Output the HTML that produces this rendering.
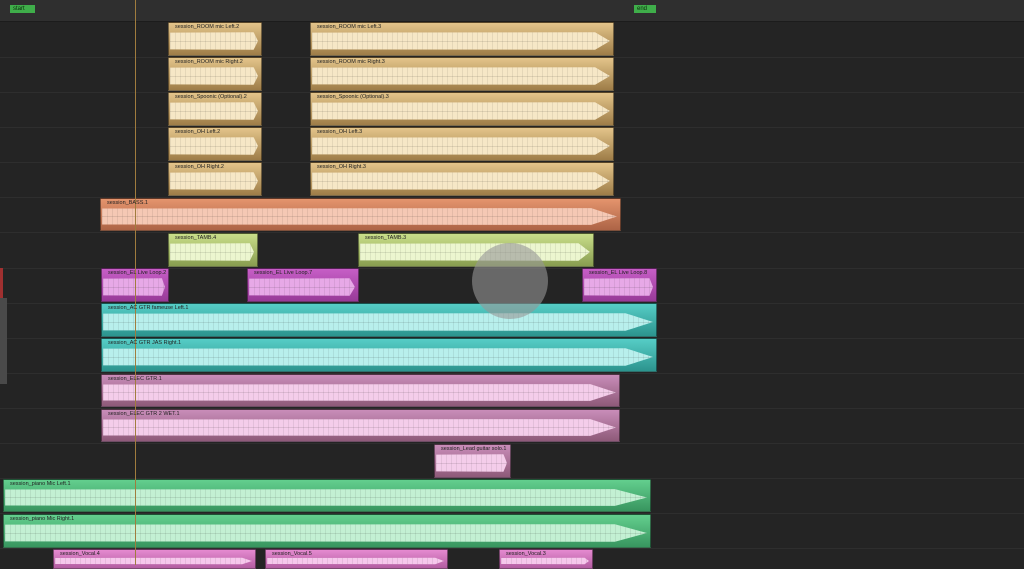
<!DOCTYPE html>
<html><head><meta charset="utf-8"><style>
*{margin:0;padding:0;box-sizing:border-box}
body{width:1024px;height:565px;background:#242424;position:relative;overflow:hidden;font-family:"Liberation Sans",sans-serif}
.ruler{position:absolute;left:0;top:0;width:1024px;height:22px;background:#2f2f2f;border-bottom:1px solid #1c1c1c}
.mk{position:absolute;top:5px;height:8px;background:#3fae4a;font-size:6px;color:#0c2a0c;line-height:8px;padding-left:3px}
.lane{position:absolute;left:0;width:1024px;height:1px;background:#2e2e2e}
.r{position:absolute;border:1px solid rgba(0,0,0,.45);border-radius:1px;overflow:hidden}
.r .l{position:absolute;left:6px;top:1px;font-size:5.5px;color:#222;white-space:nowrap;z-index:2}
.r .w{position:absolute;left:1px;right:3px;top:7px;bottom:3px;
 background-image:repeating-linear-gradient(90deg,rgba(0,0,0,.07) 0 1px,transparent 1px 5px),linear-gradient(transparent 49%,rgba(0,0,0,.2) 49% 53%,transparent 53%);
 clip-path:polygon(0 12%,95% 10%,100% 50%,95% 90%,0 88%)}
.gold{background:linear-gradient(#e3c48a,#9e7d48)}.gold .w{background-color:#f6e7c6}
.org{background:linear-gradient(#e4946d,#ad6446)}.org .w{background-color:#f5c8b4}
.lim{background:linear-gradient(#c9de8a,#889d50)}.lim .w{background-color:#ecf6cf}
.mag{background:linear-gradient(#c65ec6,#983a98)}.mag .w{background-color:#e7a9e7}
.tea{background:linear-gradient(#56cdc6,#2c948e)}.tea .w{background-color:#b8efec}
.pnk{background:linear-gradient(#c98db9,#8e5a79)}.pnk .w{background-color:#f4cdea}
.grn{background:linear-gradient(#63cf8e,#38955f)}.grn .w{background-color:#c3f0d3}
.voc{background:linear-gradient(#e58ad0,#b35da1)}.voc .w{background-color:#f6c8ec}
</style></head><body>
<div class="ruler"></div>
<div class="mk" style="left:10px;width:25px">start</div>
<div class="mk" style="left:634px;width:22px">end</div>
<div class="lane" style="top:57px"></div><div class="lane" style="top:92px"></div><div class="lane" style="top:127px"></div><div class="lane" style="top:162px"></div><div class="lane" style="top:197px"></div><div class="lane" style="top:232px"></div><div class="lane" style="top:268px"></div><div class="lane" style="top:303px"></div><div class="lane" style="top:338px"></div><div class="lane" style="top:373px"></div><div class="lane" style="top:408px"></div><div class="lane" style="top:443px"></div><div class="lane" style="top:478px"></div><div class="lane" style="top:513px"></div><div class="lane" style="top:548px"></div>
<div style="position:absolute;left:0;top:268px;width:3px;height:30px;background:#a03030"></div>
<div style="position:absolute;left:0;top:298px;width:7px;height:86px;background:#4a4a4a"></div>

<div class="r gold" style="left:168px;top:22px;width:94px;height:34px"><span class="l">session_ROOM mic Left.2</span><div class="w"></div></div>
<div class="r gold" style="left:310px;top:22px;width:304px;height:34px"><span class="l">session_ROOM mic Left.3</span><div class="w"></div></div>
<div class="r gold" style="left:168px;top:57px;width:94px;height:34px"><span class="l">session_ROOM mic Right.2</span><div class="w"></div></div>
<div class="r gold" style="left:310px;top:57px;width:304px;height:34px"><span class="l">session_ROOM mic Right.3</span><div class="w"></div></div>
<div class="r gold" style="left:168px;top:92px;width:94px;height:34px"><span class="l">session_Spoonic (Optional).2</span><div class="w"></div></div>
<div class="r gold" style="left:310px;top:92px;width:304px;height:34px"><span class="l">session_Spoonic (Optional).3</span><div class="w"></div></div>
<div class="r gold" style="left:168px;top:127px;width:94px;height:34px"><span class="l">session_OH Left.2</span><div class="w"></div></div>
<div class="r gold" style="left:310px;top:127px;width:304px;height:34px"><span class="l">session_OH Left.3</span><div class="w"></div></div>
<div class="r gold" style="left:168px;top:162px;width:94px;height:34px"><span class="l">session_OH Right.2</span><div class="w"></div></div>
<div class="r gold" style="left:310px;top:162px;width:304px;height:34px"><span class="l">session_OH Right.3</span><div class="w"></div></div>
<div class="r org" style="left:100px;top:198px;width:521px;height:33px"><span class="l">session_BASS.1</span><div class="w"></div></div>
<div class="r lim" style="left:168px;top:233px;width:90px;height:34px"><span class="l">session_TAMB.4</span><div class="w"></div></div>
<div class="r lim" style="left:358px;top:233px;width:236px;height:34px"><span class="l">session_TAMB.3</span><div class="w"></div></div>
<div class="r mag" style="left:101px;top:268px;width:68px;height:34px"><span class="l">session_EL Live Loop.2</span><div class="w"></div></div>
<div class="r mag" style="left:247px;top:268px;width:112px;height:34px"><span class="l">session_EL Live Loop.7</span><div class="w"></div></div>
<div class="r mag" style="left:582px;top:268px;width:75px;height:34px"><span class="l">session_EL Live Loop.8</span><div class="w"></div></div>
<div class="r tea" style="left:101px;top:303px;width:556px;height:34px"><span class="l">session_AC GTR fameuse Left.1</span><div class="w"></div></div>
<div class="r tea" style="left:101px;top:338px;width:556px;height:34px"><span class="l">session_AC GTR JAS Right.1</span><div class="w"></div></div>
<div class="r pnk" style="left:101px;top:374px;width:519px;height:33px"><span class="l">session_ELEC GTR.1</span><div class="w"></div></div>
<div class="r pnk" style="left:101px;top:409px;width:519px;height:33px"><span class="l">session_ELEC GTR 2 WET.1</span><div class="w"></div></div>
<div class="r pnk" style="left:434px;top:444px;width:77px;height:34px"><span class="l">session_Lead guitar solo.1</span><div class="w"></div></div>
<div class="r grn" style="left:3px;top:479px;width:648px;height:33px"><span class="l">session_piano Mic Left.1</span><div class="w"></div></div>
<div class="r grn" style="left:3px;top:514px;width:648px;height:34px"><span class="l">session_piano Mic Right.1</span><div class="w"></div></div>
<div class="r voc" style="left:53px;top:549px;width:203px;height:20px"><span class="l">session_Vocal.4</span><div class="w"></div></div>
<div class="r voc" style="left:265px;top:549px;width:183px;height:20px"><span class="l">session_Vocal.5</span><div class="w"></div></div>
<div class="r voc" style="left:499px;top:549px;width:94px;height:20px"><span class="l">session_Vocal.3</span><div class="w"></div></div>

<div style="position:absolute;left:134.5px;top:0;width:1.5px;height:565px;background:#a07c3e"></div>
<div style="position:absolute;left:472px;top:243px;width:76px;height:76px;border-radius:50%;background:rgba(150,150,150,.6)"></div>
</body></html>
